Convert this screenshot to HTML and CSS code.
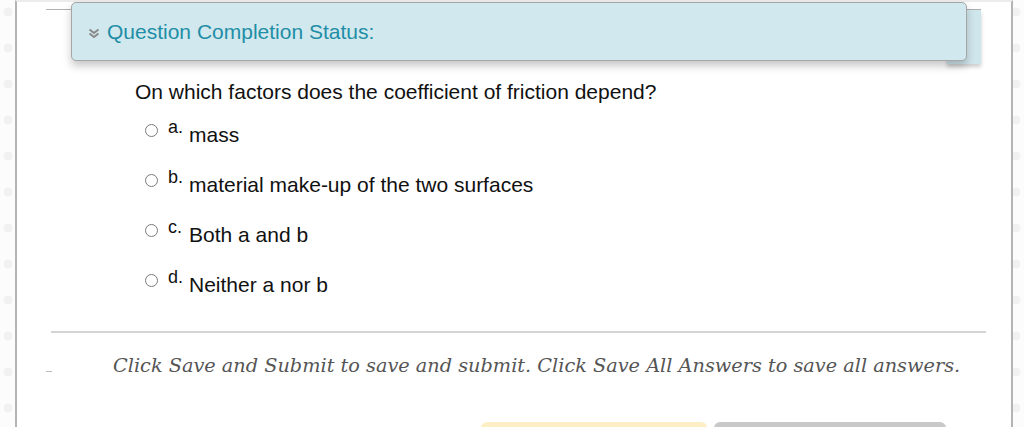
FILE: index.html
```html
<!DOCTYPE html>
<html>
  <head>
    <meta charset="utf-8">
    <title>Take Test</title>
    <link rel="stylesheet" href="styles.css">
  </head>
  <body>
    <div class="page">
      <div class="status-line"></div>
      <div class="status-back"></div>
      <div class="status-box">
        <svg class="chevron" width="12" height="10" viewBox="0 0 12 10">
          <path d="M1.5 1.5 L6 5 L10.5 1.5 M1.5 5.5 L6 9 L10.5 5.5" fill="none" stroke="#8a8a8a" stroke-width="2"/>
        </svg>
        <span class="status-title">Question Completion Status:</span>
      </div>

      <div class="question">
        <div class="question-text">On which factors does the coefficient of friction depend?</div>
        <ul class="answers">
          <li class="answer"><span class="radio"></span><span class="letter">a.</span><span class="answer-text">mass</span></li>
          <li class="answer"><span class="radio"></span><span class="letter">b.</span><span class="answer-text">material make-up of the two surfaces</span></li>
          <li class="answer"><span class="radio"></span><span class="letter">c.</span><span class="answer-text">Both a and b</span></li>
          <li class="answer"><span class="radio"></span><span class="letter">d.</span><span class="answer-text">Neither a nor b</span></li>
        </ul>
      </div>

      <div class="divider"></div>

      <div class="footer-row">
        <span class="dash"></span>
        <p class="instructions">Click Save and Submit to save and submit. Click Save All Answers to save all answers.</p>
      </div>

      <div class="button-row">
        <span class="btn btn-save-submit"></span>
        <span class="btn btn-save-all"></span>
      </div>
    </div>
  </body>
</html>
```

FILE: styles.css
```css
html, body {
  margin: 0;
  padding: 0;
}
body {
  width: 1024px;
  height: 427px;
  overflow: hidden;
  font-family: "Liberation Sans", Arial, sans-serif;
  color: #111;
  background-color: #fcfcfc;
  background-image:
    radial-gradient(circle at 8px 12px, #f1f1f1 4px, transparent 5px);
  background-size: 16px 36px;
}
.page {
  position: relative;
  box-sizing: border-box;
  margin-left: 15px;
  width: 998px;
  height: 427px;
  background-color: #fff;
  border-left: 2px solid #b4b4b4;
  border-right: 2px solid #b4b4b4;
  border-top: 2px solid #ececec;
}
.status-line {
  position: absolute;
  left: 29px;
  top: 7px;
  width: 935px;
  border-top: 1px solid #b0b0b0;
}
.status-back {
  position: absolute;
  left: 930px;
  top: 8px;
  width: 34px;
  height: 54px;
  background-color: #cfe6ec;
  box-shadow: 0 3px 4px rgba(0, 0, 0, 0.2);
}
.status-box {
  position: relative;
  box-sizing: border-box;
  margin-left: 54px;
  width: 896px;
  height: 59px;
  display: flex;
  align-items: center;
  padding-left: 16px;
  background-color: #d1e8ee;
  border: 1px solid #a6a6a6;
  border-radius: 5px;
  box-shadow: 0 5px 8px rgba(0, 0, 0, 0.22);
}
.chevron {
  margin-right: 7px;
  margin-top: 2px;
}
.status-title {
  font-size: 21px;
  color: #1f8ea6;
}
.question {
  padding-left: 118px;
  padding-top: 19px;
}
.question-text {
  font-size: 21px;
  line-height: 24px;
}
.answers {
  list-style: none;
  margin: 6px 0 0 0;
  padding: 0 0 0 10px;
}
.answer {
  display: flex;
  align-items: flex-start;
  height: 50px;
}
.radio {
  box-sizing: border-box;
  width: 13px;
  height: 13px;
  margin-top: 14px;
  border: 1px solid #7a7a7a;
  border-radius: 50%;
  margin-right: 10px;
}
.letter {
  width: 21px;
  font-size: 18px;
  line-height: 18px;
  margin-top: 8px;
}
.answer-text {
  font-size: 21px;
  line-height: 21px;
  margin-top: 14px;
}
.divider {
  margin: 21px 25px 0 34px;
  border-top: 2px solid #d4d4d4;
}
.footer-row {
  display: flex;
  align-items: center;
  height: 64px;
}
.dash {
  width: 6px;
  margin-left: 29px;
  margin-top: 12px;
  border-top: 1px solid #bbb;
}
.instructions {
  margin: 0 0 0 61px;
  font-family: "DejaVu Serif", Georgia, serif;
  font-style: italic;
  font-size: 19.3px;
  color: #555;
}
.button-row {
  display: flex;
  gap: 7px;
  margin-left: 464px;
  margin-top: 25px;
}
.btn {
  display: block;
  height: 20px;
  border-radius: 6px;
}
.btn-save-submit {
  width: 226px;
  background-color: #fdeec4;
}
.btn-save-all {
  width: 232px;
  background-color: #c8c8c8;
}
```
